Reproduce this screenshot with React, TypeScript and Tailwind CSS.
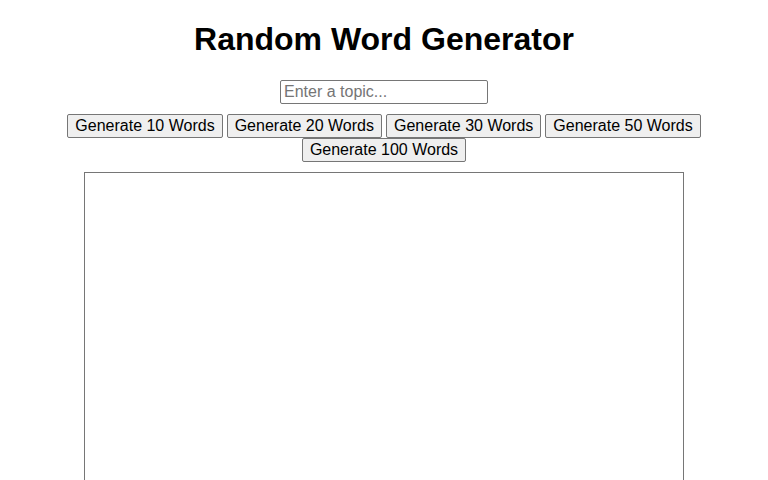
import { useState } from "react";

const COUNTS = [10, 20, 30, 50, 100];

export default function App() {
  const [topic, setTopic] = useState("");
  const [words, setWords] = useState<string[]>([]);

  const generate = (count: number) => {
    const base = topic.trim() || "word";
    setWords(Array.from({ length: count }, (_, i) => `${base}-${i + 1}`));
  };

  return (
    <div
      className="flex flex-col items-center text-black bg-white min-h-screen"
      style={{ fontFamily: '"Liberation Sans", Arial, sans-serif' }}
    >
      <h1 className="text-[32px] leading-[37px] font-bold my-[21.44px]">Random Word Generator</h1>

      <input
        type="text"
        value={topic}
        onChange={(e) => setTopic(e.target.value)}
        placeholder="Enter a topic..."
        className="w-[208px] h-6 border border-[#767676] rounded-[2px] px-[3px] text-base leading-[18px] placeholder:text-[#757575] outline-none"
      />

      <div className="flex flex-wrap justify-center gap-x-[4px] mt-[10px] w-full px-[40px]">
        {COUNTS.map((n) => (
          <button
            key={n}
            onClick={() => generate(n)}
            className="h-6 px-[7px] border border-[#767676] rounded-[2px] bg-[#efefef] text-base leading-[18px]"
          >
            Generate {n} Words
          </button>
        ))}
      </div>

      <div className="w-[600px] h-[400px] mt-[10px] border border-[#767676] overflow-auto">
        {words.map((w) => (
          <div key={w}>{w}</div>
        ))}
      </div>
    </div>
  );
}
